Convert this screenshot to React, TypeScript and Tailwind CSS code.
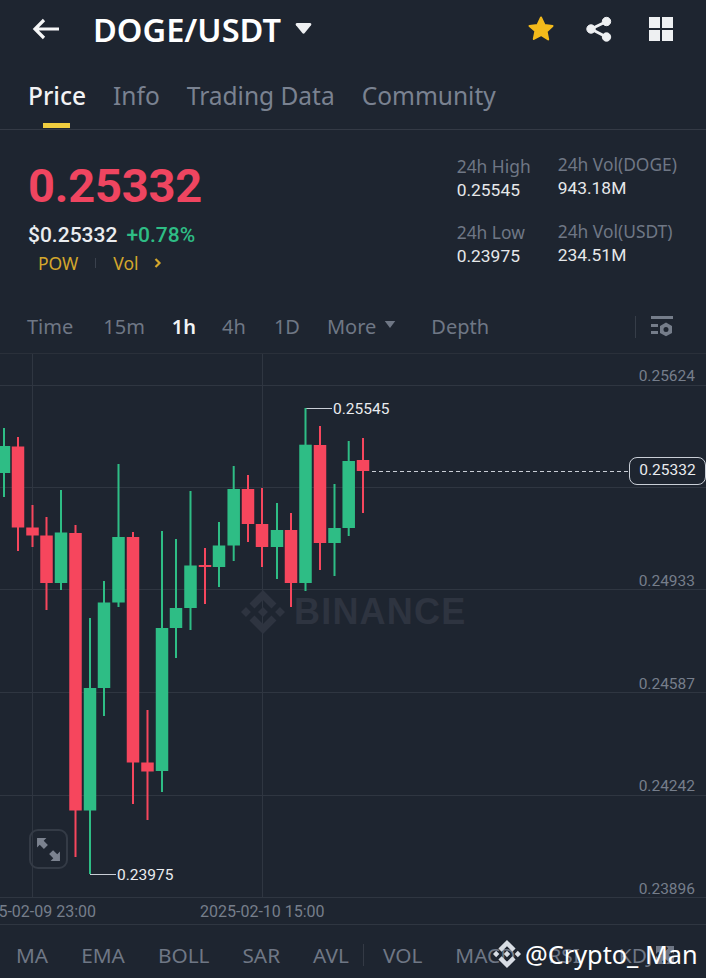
import React from 'react';

const UP = '#2ebd85';
const DOWN = '#f6465d';

// x, wick top, wick bottom, body top, body bottom (page y), up?
const candles: [number, number, number, number, number, boolean][] = [
  [4, 428, 497, 446, 473, true],
  [18, 437, 551, 446.5, 527.5, false],
  [32.5, 505, 547, 527.5, 535.5, false],
  [46.5, 517, 610, 535.5, 583, false],
  [61, 490, 590, 532.5, 583, true],
  [75.5, 525, 857, 533, 810.5, false],
  [90, 618, 874, 688, 810.5, true],
  [104, 581, 716, 602.5, 688, true],
  [118.5, 464, 607, 537, 602.5, true],
  [133, 532, 804, 537, 762.5, false],
  [147.5, 710, 820, 762.5, 771.5, false],
  [162, 531, 792, 628, 771, true],
  [176, 539, 658, 608, 628, true],
  [190.5, 491, 630, 565.5, 608, true],
  [205, 548, 604, 565, 567, false],
  [219, 522, 587, 545.5, 567, true],
  [233.7, 466, 561, 489, 545.5, true],
  [248, 475, 542, 489, 524, false],
  [262, 488, 567, 524, 547, false],
  [277, 503, 579, 530, 547, true],
  [291, 513, 607, 530, 583, false],
  [305.5, 408, 591, 444.7, 583, true],
  [320, 426, 570, 445, 543, false],
  [334.5, 484, 576, 528, 543, true],
  [348.7, 441, 536, 461, 528, true],
  [363, 438, 513, 460, 471, false],
];

const CHART_TOP = 354;
const gridRows = [385, 487, 589, 692, 795];
const axisPrices: [string, string][] = [
  ['0.25624', 'top-[13px]'],
  ['0.24933', 'top-[218px]'],
  ['0.24587', 'top-[321px]'],
  ['0.24242', 'top-[423px]'],
  ['0.23896', 'top-[526px]'],
];

const BinanceLogo = ({ className }: { className: string }) => (
  <svg viewBox="0 0 24 24" className={className} fill="currentColor">
    <path d="M16.624 13.9202l2.7175 2.7154-7.353 7.353-7.353-7.352 2.7175-2.7164 4.6355 4.6595 4.6356-4.6595zm4.6366-4.6366L24 12l-2.7154 2.7164L18.5682 12l2.6924-2.7164zm-9.272.001l2.7163 2.6914-2.7164 2.7174v-.001L9.2721 12l2.7164-2.7154zm-9.2722-.001L5.4088 12l-2.6914 2.6914L0 12l2.7164-2.7164zM11.9885.0115l7.353 7.329-2.7174 2.7154-4.6356-4.6356-4.6355 4.6595-2.7174-2.7154 7.353-7.353z" />
  </svg>
);

const Stat = ({ label, value }: { label: string; value: string }) => (
  <div className="flex flex-col">
    <span className="text-[17.4px] leading-[24px] text-[#6f7785]">{label}</span>
    <span className="font-['Roboto',sans-serif] text-[17.4px] leading-[24px] text-[#e6e8ea]">{value}</span>
  </div>
);

const Chart = () => (
  <div className="relative h-[543px] w-full overflow-hidden">
    <svg className="block" width="706" height="543" viewBox={`0 ${CHART_TOP} 706 543`}>
      {gridRows.map(y => (
        <line key={y} x1="0" x2="706" y1={y + 0.5} y2={y + 0.5} stroke="#2f3641" />
      ))}
      <line x1="32.5" x2="32.5" y1="354" y2="897" stroke="#2f3641" />
      <line x1="262.5" x2="262.5" y1="354" y2="897" stroke="#2f3641" />
      <line x1="372" x2="628" y1="471.5" y2="471.5" stroke="#c9ced6" strokeDasharray="4 3" />
      <path d="M305.5 408.5H332M90 874.5H116" stroke="#c9ced6" fill="none" />
      {candles.map(([x, top, bottom, bodyTop, bodyBottom, up]) => (
        <g key={x} fill={up ? UP : DOWN}>
          <rect x={x - 1} y={top} width="2" height={bottom - top} />
          <rect x={x - 6.25} y={bodyTop} width="12.5" height={bodyBottom - bodyTop} />
        </g>
      ))}
    </svg>

    <div className="absolute left-[241px] top-[236px] flex items-center gap-[9px] text-[#2e3440]">
      <BinanceLogo className="h-[44px] w-[44px]" />
      <span className="font-['Liberation_Sans',sans-serif] text-[36px] font-bold leading-none tracking-[1.2px]">BINANCE</span>
    </div>

    {axisPrices.map(([price, top]) => (
      <span key={price} className={`absolute right-[11px] font-['Roboto',sans-serif] text-[15.5px] leading-[18px] text-[#767e8b] ${top}`}>
        {price}
      </span>
    ))}
    <span className="absolute left-[629px] top-[103px] flex h-[28px] w-[77px] items-center justify-center rounded-[8px] border border-[#c9ced6] bg-[#1e2530] font-['Roboto',sans-serif] text-[15.5px] text-[#eaecef]">
      0.25332
    </span>
    <span className="absolute left-[333px] top-[46px] font-['Roboto',sans-serif] text-[15.5px] leading-[18px] text-[#eaecef]">0.25545</span>
    <span className="absolute left-[117px] top-[512px] font-['Roboto',sans-serif] text-[15.5px] leading-[18px] text-[#eaecef]">0.23975</span>

    <div className="absolute left-[29px] top-[475px] flex h-[40px] w-[39px] items-center justify-center rounded-[9px] border-2 border-[#343b46]">
      <svg viewBox="0 0 24 24" className="h-[25px] w-[25px]" fill="#7b828f">
        <path d="M1 1h9L7.4 3.6l4 4-3.8 3.8-4-4L1 10zM23 23h-9l2.6-2.6-4-4 3.8-3.8 4 4L23 14z" />
      </svg>
    </div>
  </div>
);

export default function App() {
  return (
    <div className="relative h-[978px] w-[706px] overflow-hidden bg-[#1e2530] font-['Noto_Sans',sans-serif]">
      {/* Header */}
      <div className="flex h-[58px] items-center pl-[32px] pr-[33px] pb-[1px]">
        <svg viewBox="0 0 28 22" className="h-[22px] w-[28px]" fill="none" stroke="#f5f6f7" strokeWidth="3.2">
          <path d="M27 11H3M12 2l-9 9 9 9" />
        </svg>
        <span className="ml-[33px] pt-[3px] text-[32.6px] font-semibold leading-none text-white">DOGE/USDT</span>
        <svg viewBox="0 0 16 11" className="ml-[14px] h-[11px] w-[17px]" fill="#eef0f2">
          <path d="M1.5 0h13c1.2 0 1.8 1.2 1 2.2L9 10.2c-.5.6-1.500.6-2 0L.5 2.200C-.3 1.200.300 0 1.500 0z" />
        </svg>
        <div className="ml-auto flex items-center">
          <svg viewBox="0 0 28 28" className="h-[28px] w-[28px]" fill="#f3ba1b" stroke="#f3ba1b" strokeWidth="2" strokeLinejoin="round">
            <path d="M14 2.500l3.500 7.400 8 1-5.900 5.500 1.600 8L14 20l-7.200 3.900 1.600-8L2.500 10.900l8-1z" />
          </svg>
          <svg viewBox="0 0 28 28" className="ml-[30px] h-[28px] w-[28px]" fill="#eef0f2" stroke="#eef0f2">
            <circle cx="21.500" cy="6.500" r="4.200" />
            <circle cx="21.500" cy="22" r="4.200" />
            <circle cx="6" cy="14" r="4.200" />
            <path d="M6 14L21.500 6.500M6 14l15.500 8" strokeWidth="3" />
          </svg>
          <div className="ml-[36px] grid grid-cols-2 gap-[2px]">
            <span className="h-[11px] w-[11px] bg-[#eef0f2]" />
            <span className="h-[11px] w-[11px] bg-[#eef0f2]" />
            <span className="h-[11px] w-[11px] bg-[#eef0f2]" />
            <span className="h-[11px] w-[11px] bg-[#eef0f2]" />
          </div>
        </div>
      </div>

      {/* Tabs */}
      <div className="flex h-[72px] items-center gap-[27px] border-b border-[#343a45] pl-[28px] pt-[6px] text-[24.5px] leading-none text-[#7a8291]">
        <span className="relative font-medium text-[#f2f3f5]">
          Price
          <span className="absolute left-[15px] top-[39px] h-[5px] w-[27px] bg-[#f0cd3f]" />
        </span>
        <span>Info</span>
        <span>Trading Data</span>
        <span>Community</span>
      </div>

      {/* Ticker summary */}
      <div className="flex h-[170px] justify-between pl-[28px] pr-[29px]">
        <div className="flex flex-col pt-[28px]">
          <span className="font-['Roboto',sans-serif] text-[47px] font-bold leading-[56px] tracking-[-0.2px] text-[#ef4560]">0.25332</span>
          <div className="mt-[9px] flex items-center gap-[9px] font-['Roboto',sans-serif] text-[21px] font-medium leading-[24px]">
            <span className="text-[#eaecef]">$0.25332</span>
            <span className="text-[#2ebd85]">+0.78%</span>
          </div>
          <div className="ml-[10px] mt-[4px] flex items-center text-[17.5px] leading-[24px] text-[#d4a72c]">
            <span>POW</span>
            <span className="mx-[17px] h-[10px] w-px bg-[#3a414d]" />
            <span>Vol</span>
            <svg viewBox="0 0 8 10" className="ml-[15px] h-[10px] w-[8px]" fill="none" stroke="#d4a72c" strokeWidth="2.200">
              <path d="M1.500 1l4 4-4 4" />
            </svg>
          </div>
        </div>
        <div className="flex gap-[27px] pt-[22px]">
          <div className="flex flex-col gap-[18px] pt-[2px]">
            <Stat label="24h High" value="0.25545" />
            <Stat label="24h Low" value="0.23975" />
          </div>
          <div className="flex flex-col gap-[19px]">
            <Stat label="24h Vol(DOGE)" value="943.18M" />
            <Stat label="24h Vol(USDT)" value="234.51M" />
          </div>
        </div>
      </div>

      {/* Timeframes */}
      <div className="flex h-[54px] items-center border-b border-[#2a303a] pl-[27px] pr-[33px] text-[20px] leading-none text-[#6f7785]">
        <span>Time</span>
        <span className="ml-[30px]">15m</span>
        <span className="ml-[27px] font-semibold text-[#f2f3f5]">1h</span>
        <span className="ml-[26px]">4h</span>
        <span className="ml-[28px]">1D</span>
        <span className="ml-[27px]">More</span>
        <svg viewBox="0 0 12 8" className="ml-[8px] mb-[4px] h-[7px] w-[12px]" fill="#6f7785">
          <path d="M0 0h12L6 8z" />
        </svg>
        <span className="ml-[35px]">Depth</span>
        <span className="ml-auto h-[22px] w-px bg-[#363d48]" />
        <svg viewBox="0 0 22 22" className="ml-[15px] h-[22px] w-[22px]" fill="#757d8a">
          <path d="M0 0h22v3H0zM0 8h7v3H0zM0 15h7v3H0z" />
          <path fillRule="evenodd" d="M15 6.500l6 3.400v7l-6 3.400-6-3.400v-7zM15 11a2.500 2.500 0 100 5 2.500 2.500 0 000-5z" />
        </svg>
      </div>

      <Chart />

      {/* Time axis */}
      <div className="relative h-[28px] border-y border-[#2f3641] font-['Roboto',sans-serif] text-[16px] leading-[26px] text-[#767e8b]">
        <span className="absolute right-[610px] top-[1px] whitespace-nowrap">2025-02-09 23:00</span>
        <span className="absolute left-[200px] top-[1px] whitespace-nowrap">2025-02-10 15:00</span>
      </div>

      {/* Indicators */}
      <div className="flex h-[53px] items-center gap-[33px] pl-[16px] pt-[7px] text-[20.8px] leading-none text-[#6f7785]">
        <span>MA</span>
        <span>EMA</span>
        <span>BOLL</span>
        <span>SAR</span>
        <span>AVL</span>
        <span className="-ml-[19px] -mr-[14px] h-[22px] w-px bg-[#343a45]" />
        <span>VOL</span>
        <span>MACD</span>
        <span>RSI</span>
        <span className="ml-[6px]">KDJ</span>
        <svg viewBox="0 0 18 18" className="-ml-[30px] h-[18px] w-[18px] shrink-0" fill="#6f7785">
          <path d="M0 0h8L5.800 2.200l3.200 3.200 3.200-3.200L10 0h8v8l-2.200-2.200L12.600 9l3.200 3.200L18 10v8h-8l2.200-2.200L9 12.600l-3.200 3.200L8 18H0v-8l2.200 2.200L5.400 9 2.200 5.800 0 8z" />
        </svg>
      </div>

      {/* Source watermark */}
      <div className="absolute left-[493px] top-[940px] flex items-center gap-[4px] text-[#f4f5f6]">
        <BinanceLogo className="h-[28px] w-[28px] text-[#d8dde4]" />
        <span className="text-[25.3px] leading-[28px] text-white">@Crypto_ Man</span>
      </div>
    </div>
  );
}
